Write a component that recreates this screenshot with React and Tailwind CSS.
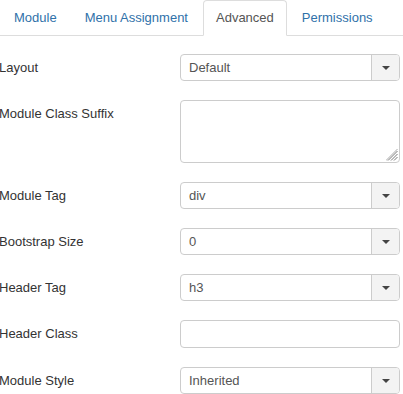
import React from "react";

function Select({ value }) {
  return (
    <div className="flex h-[27px] w-[220px] rounded-[4px] border border-[#ccc] bg-white">
      <div className="flex flex-1 items-center pl-[8px] text-[#555]">{value}</div>
      <div className="flex w-[28px] items-center justify-center rounded-r-[3px] border-l border-[#ccc] bg-[#f3f3f3]">
        <div className="h-0 w-0 border-x-[4px] border-t-[4px] border-x-transparent border-t-[#444]" />
      </div>
    </div>
  );
}

function Row({ label, children, last }) {
  return (
    <div className={"flex " + (last ? "" : "mb-[19px]")}>
      <div className="w-[181px] shrink-0 pt-[5px] leading-[18px] text-[#333]">{label}</div>
      {children}
    </div>
  );
}

export default function App() {
  const tabs = ["Module", "Menu Assignment", "Advanced", "Permissions"];
  return (
    <div className="h-[394px] w-[403px] overflow-hidden bg-white font-['Liberation_Sans',Arial,sans-serif] text-[13px]">
      <ul className="flex h-[36px] border-b border-[#ddd] pl-[1px]">
        {tabs.map((t) => {
          const active = t === "Advanced";
          return (
            <li key={t} className="-mb-px mr-[2px]">
              <div
                className={
                  "block rounded-t-[4px] border px-[12px] py-[8px] leading-[18px] " +
                  (active
                    ? "border-[#ddd] border-b-white bg-white text-[#555]"
                    : "border-transparent text-[#3071a9]")
                }
              >
                {t}
              </div>
            </li>
          );
        })}
      </ul>
      <div className="-ml-[1px] mt-[18px]">
        <Row label="Layout">
          <Select value="Default" />
        </Row>
        <Row label="Module Class Suffix">
          <div className="relative h-[63px] w-[220px] rounded-[4px] border border-[#ccc] bg-white">
            <svg className="absolute bottom-[1px] right-[1px]" width="12" height="12" viewBox="0 0 12 12">
              <g stroke="#777" strokeWidth="1">
                <line x1="11.5" y1="2" x2="2" y2="11.5" />
                <line x1="11.5" y1="5" x2="5" y2="11.5" />
                <line x1="11.5" y1="8" x2="8" y2="11.5" />
                <line x1="11.5" y1="0" x2="0" y2="11.5" stroke="#aaa" />
              </g>
            </svg>
          </div>
        </Row>
        <Row label="Module Tag">
          <Select value="div" />
        </Row>
        <Row label="Bootstrap Size">
          <Select value="0" />
        </Row>
        <Row label="Header Tag">
          <Select value="h3" />
        </Row>
        <Row label="Header Class">
          <div className="h-[28px] w-[220px] rounded-[4px] border border-[#ccc] bg-white" />
        </Row>
        <Row label="Module Style" last>
          <Select value="Inherited" />
        </Row>
      </div>
    </div>
  );
}
